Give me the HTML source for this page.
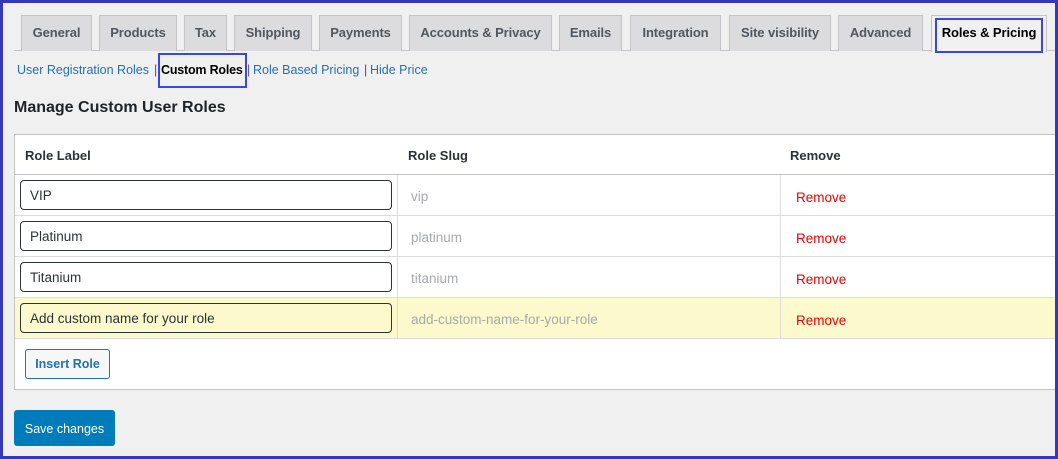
<!DOCTYPE html>
<html><head><style>
*{box-sizing:border-box;margin:0;padding:0}
body{width:1058px;height:459px;background:#f0f0f1;font-family:"Liberation Sans",sans-serif;font-size:13px;color:#1d2327;position:relative;overflow:hidden}
.frame{position:absolute;left:0;top:0;width:1058px;height:459px;border:3px solid #3538b8;z-index:10;pointer-events:none}
.tabline{position:absolute;left:14px;right:0;top:50px;height:1px;background:#c3c4c7}
.tab{position:absolute;top:15px;height:36px;background:#dcdcde;border:1px solid #c3c4c7;border-bottom:none;color:#50575e;font-weight:bold;font-size:13px;line-height:34px;text-align:center;white-space:nowrap;letter-spacing:-0.1px}
.tab.act{background:#f0f0f1;color:#000;height:37px}
.actbox{position:absolute;left:935px;top:18px;width:108px;height:35px;border:2px solid #3b45e0;z-index:5}
.sub{position:absolute;top:62px;font-size:12.5px;color:#2271b1;line-height:16px;white-space:nowrap}
.cbox{position:absolute;left:158px;top:53px;width:89px;height:35px;border:2px solid #3b45e0}
h2{position:absolute;left:14px;top:99px;font-size:16px;font-weight:bold;color:#1d2327}
.tbl{position:absolute;left:14px;top:134px;width:1044px;height:256px;background:#fff;border:1px solid #c3c4c7}
.th{position:absolute;top:148px;font-weight:bold;font-size:13px;color:#2c3338}
.hl{position:absolute;left:15px;width:1043px;height:1px}
.vl{position:absolute;width:1px;background:#dcdcde}
.inp{position:absolute;left:20px;width:372px;height:30px;border:1px solid #2c3338;border-radius:4px;background:#fff;padding-left:9px;padding-top:2px;line-height:26px;font-size:13.5px;color:#2c3338}
.slug{position:absolute;left:411px;font-size:13.5px;color:#a7aaad}
.rm{position:absolute;left:796px;font-size:13.5px;color:#e00}
.ins{position:absolute;left:25px;top:349px;width:85px;height:30px;border:1px solid #2271b1;border-radius:3px;background:#f6f7f7;color:#2271b1;font-weight:bold;font-size:12.5px;line-height:29px;text-align:center}
.save{position:absolute;left:14px;top:410px;width:101px;height:36px;background:#007cba;border-radius:3px;color:#fff;font-size:12.5px;line-height:38px;text-align:center}
</style></head><body>
<div class="tabline"></div>
<div class="tab" style="left:21px;width:71px">General</div>
<div class="tab" style="left:99px;width:78px">Products</div>
<div class="tab" style="left:184px;width:43px">Tax</div>
<div class="tab" style="left:234px;width:78px">Shipping</div>
<div class="tab" style="left:319px;width:83px">Payments</div>
<div class="tab" style="left:409px;width:143px">Accounts &amp; Privacy</div>
<div class="tab" style="left:559px;width:63px">Emails</div>
<div class="tab" style="left:630px;width:91px">Integration</div>
<div class="tab" style="left:729px;width:102px">Site visibility</div>
<div class="tab" style="left:838px;width:85px">Advanced</div>
<div class="tab act" style="left:931px;width:116px">Roles &amp; Pricing</div>
<div class="actbox"></div>
<div class="sub" style="left:17px">User Registration Roles</div>
<div class="sub" style="left:154px;color:#50575e">|</div>
<div class="sub" style="left:161px;color:#000;font-weight:bold;letter-spacing:-0.2px">Custom Roles</div>
<div class="cbox"></div>
<div class="sub" style="left:247px;color:#50575e">|</div>
<div class="sub" style="left:253px">Role Based Pricing</div>
<div class="sub" style="left:364px;color:#50575e">|</div>
<div class="sub" style="left:370px">Hide Price</div>
<h2>Manage Custom User Roles</h2>
<div class="tbl"></div>
<div style="position:absolute;left:15px;top:298px;width:1043px;height:41px;background:#fcf9cc"></div>
<div class="th" style="left:25px">Role Label</div>
<div class="th" style="left:408px">Role Slug</div>
<div class="th" style="left:790px">Remove</div>
<div class="hl" style="top:174px;background:#c3c4c7"></div>
<div class="hl" style="top:215px;background:#dcdcde"></div>
<div class="hl" style="top:256px;background:#dcdcde"></div>
<div class="hl" style="top:297px;background:#dcdcde"></div>
<div class="hl" style="top:338px;background:#dcdcde"></div>
<div class="vl" style="left:397px;top:175px;height:164px"></div>
<div class="vl" style="left:780px;top:175px;height:164px"></div>
<div class="inp" style="top:180px">VIP</div>
<div class="inp" style="top:221px">Platinum</div>
<div class="inp" style="top:262px">Titanium</div>
<div class="inp" style="top:303px;background:#fcf9cc">Add custom name for your role</div>
<div class="slug" style="top:189px">vip</div>
<div class="slug" style="top:230px">platinum</div>
<div class="slug" style="top:271px">titanium</div>
<div class="slug" style="top:312px">add-custom-name-for-your-role</div>
<div class="rm" style="top:190px">Remove</div>
<div class="rm" style="top:231px">Remove</div>
<div class="rm" style="top:272px">Remove</div>
<div class="rm" style="top:313px">Remove</div>
<div class="ins">Insert Role</div>
<div class="save">Save changes</div>
<div class="frame"></div>
</body></html>
